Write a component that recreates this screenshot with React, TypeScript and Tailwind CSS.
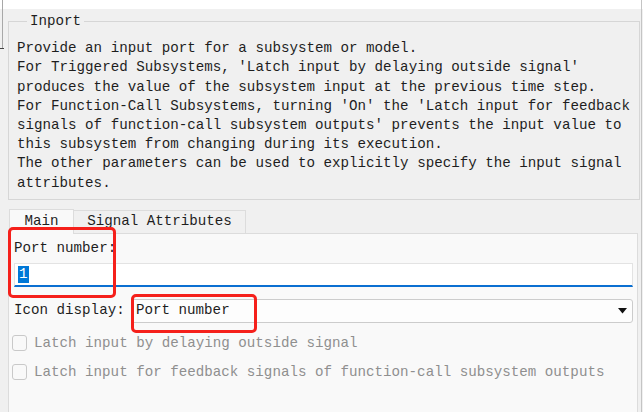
import React from 'react'

const mono = { fontFamily: '"Liberation Mono", "Noto Sans CJK SC", monospace' }

const description = [
  'Provide an input port for a subsystem or model.',
  "For Triggered Subsystems, 'Latch input by delaying outside signal'",
  'produces the value of the subsystem input at the previous time step.',
  "For Function-Call Subsystems, turning 'On' the 'Latch input for feedback",
  "signals of function-call subsystem outputs' prevents the input value to",
  'this subsystem from changing during its execution.',
  'The other parameters can be used to explicitly specify the input signal',
  'attributes.',
]

function Checkbox({ label }: { label: string }) {
  return (
    <div className="flex items-center h-[29px] pl-[4px]">
      <div className="w-[15px] h-[16px] rounded-[3px] border border-[#c9c9c9] bg-[#f9f9f9]" />
      <span className="ml-[7px] text-[#8f8f8f]">{label}</span>
    </div>
  )
}

export default function App() {
  return (
    <div
      className="relative w-[643px] h-[412px] overflow-hidden bg-[#f0f0f0] text-[14.2px] leading-[19.2px] text-[#1e1e1e]"
      style={mono}
    >
      <div className="h-[9px] bg-white" />
      {/* window edges */}
      <div className="absolute left-[2px] top-0 w-px h-[48px] bg-[#a8a8a8]" />
      <div className="absolute left-0 top-[48px] w-[4px] h-px bg-[#444]" />
      <div className="absolute right-[1px] top-0 w-px h-full bg-[#c4c4c4]" />

      <div className="pl-[8px] pr-[3px]">
        <fieldset className="border border-[#d6d6d6] pl-[8px] pr-[4px] pt-[8px] pb-[6px] mt-[3px]">
          <legend className="ml-[10px] px-[3px]">Inport</legend>
          {description.map((line, i) => (
            <div key={i} className="whitespace-pre">{line}</div>
          ))}
        </fieldset>

        <div className="mt-[8px] pr-[2px]">
          <div className="flex items-end h-[25px]">
            <div className="w-[65px] h-[25px] ml-[1px] border border-b-0 border-[#dcdcdc] bg-[#f9f9f9] flex items-center justify-center relative top-px">
              Main
            </div>
            <div className="w-[172px] h-[23px] border border-b-0 border-l-0 border-[#dcdcdc] bg-[#f0f0f0] flex items-center justify-center">
              Signal Attributes
            </div>
          </div>
          <div className="h-[190px] border border-[#dcdcdc] bg-[#f9f9f9] pl-[5px] pr-[4px] pt-[5px]">
            <div className="h-[19px]">Port number:</div>
            <div className="mt-[5px] h-[24px] bg-white border border-[#e3e3e3] border-b-2 border-b-[#0a6fd1] flex items-center pl-[3px]">
              <span className="bg-[#0078d7] text-white h-[17px] leading-[17px] px-[1px]">1</span>
            </div>
            <div className="mt-[12px] flex items-center h-[24px]">
              <span className="w-[117px]">Icon display:</span>
              <div className="flex-1 h-[24px] bg-[#fdfdfd] border border-[#cccccc] rounded-[3px] flex items-center justify-between pl-[4px] pr-[5px]">
                <span>Port number</span>
                <svg width="9" height="6" viewBox="0 0 9 6">
                  <path d="M0 0 H9 L4.5 5.5 Z" fill="#111" />
                </svg>
              </div>
            </div>
            <div className="mt-[6px] -ml-[6px]">
              <Checkbox label="Latch input by delaying outside signal" />
              <Checkbox label="Latch input for feedback signals of function-call subsystem outputs" />
            </div>
          </div>
        </div>
      </div>

      {/* red annotation boxes */}
      <div className="absolute left-[8px] top-[227px] w-[108px] h-[71px] border-[3px] border-[#f5201b] rounded-[5px]" />
      <div className="absolute left-[131px] top-[294px] w-[126px] h-[39px] border-[3px] border-[#f5201b] rounded-[5px]" />
    </div>
  )
}
